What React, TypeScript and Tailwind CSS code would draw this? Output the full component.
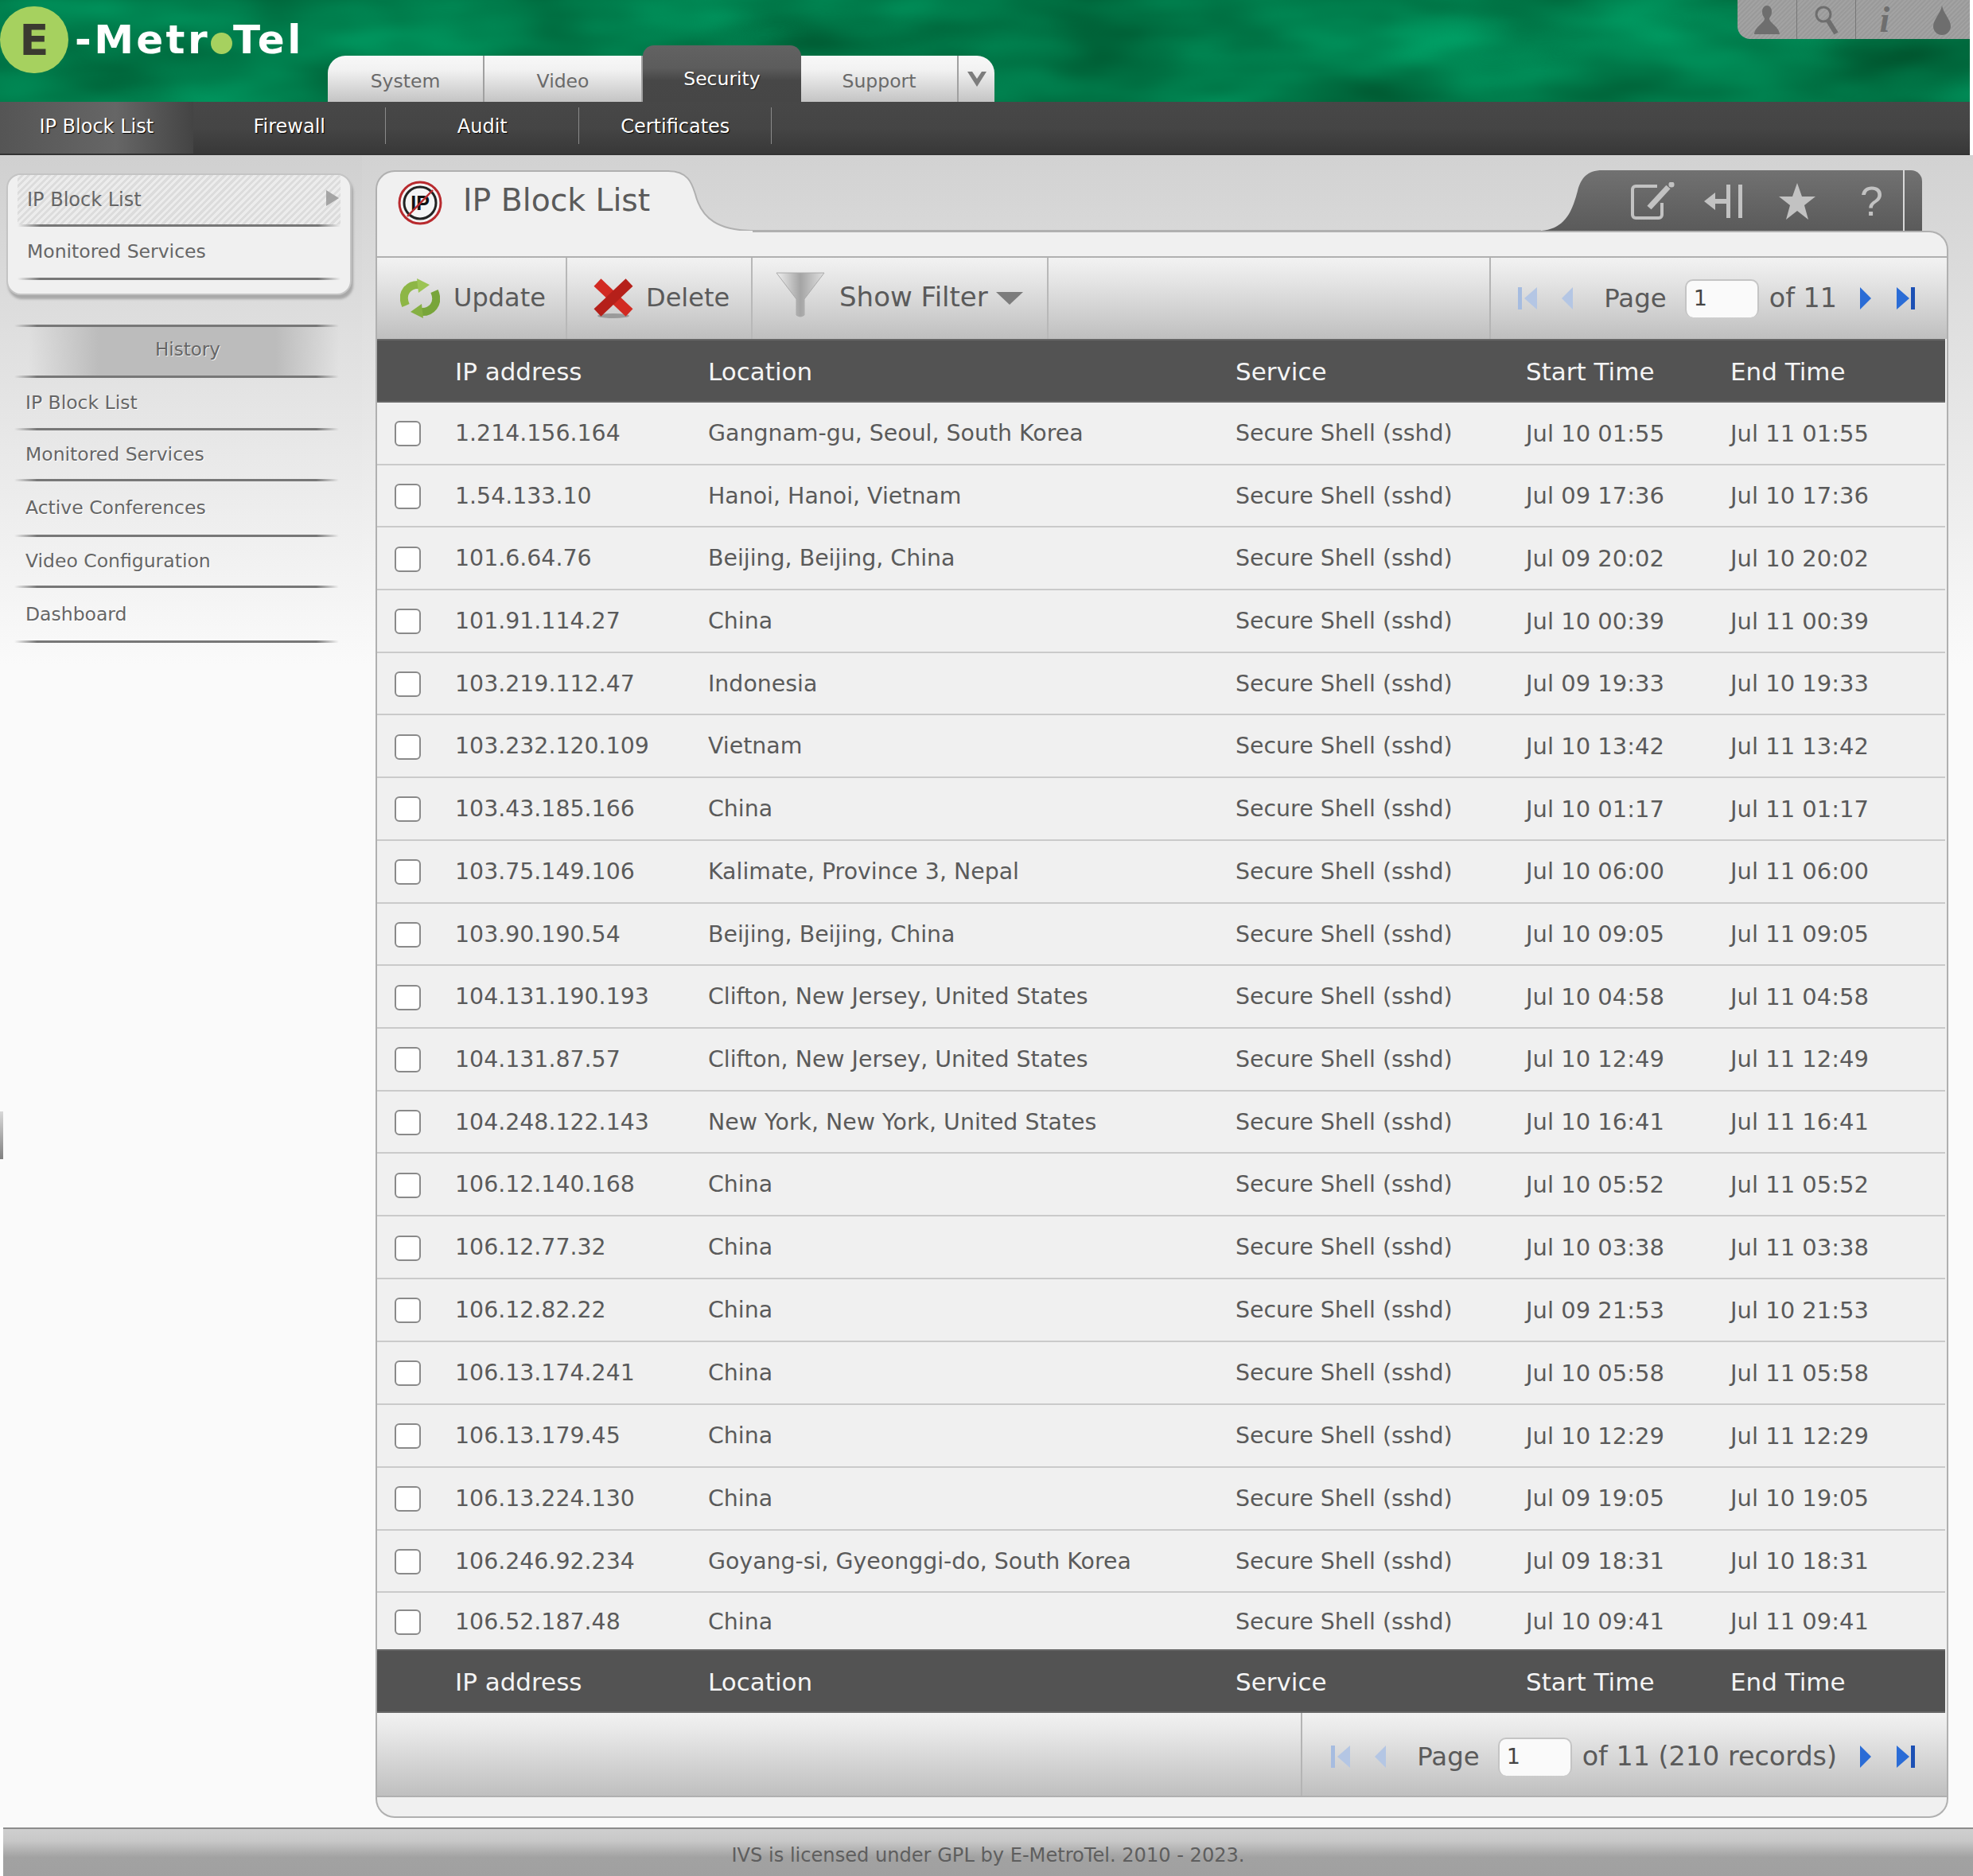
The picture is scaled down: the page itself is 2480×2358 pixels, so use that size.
import React from "react";

const rows: [string, string, string, string][] = [
  ["1.214.156.164", "Gangnam-gu, Seoul, South Korea", "Jul 10 01:55", "Jul 11 01:55"],
  ["1.54.133.10", "Hanoi, Hanoi, Vietnam", "Jul 09 17:36", "Jul 10 17:36"],
  ["101.6.64.76", "Beijing, Beijing, China", "Jul 09 20:02", "Jul 10 20:02"],
  ["101.91.114.27", "China", "Jul 10 00:39", "Jul 11 00:39"],
  ["103.219.112.47", "Indonesia", "Jul 09 19:33", "Jul 10 19:33"],
  ["103.232.120.109", "Vietnam", "Jul 10 13:42", "Jul 11 13:42"],
  ["103.43.185.166", "China", "Jul 10 01:17", "Jul 11 01:17"],
  ["103.75.149.106", "Kalimate, Province 3, Nepal", "Jul 10 06:00", "Jul 11 06:00"],
  ["103.90.190.54", "Beijing, Beijing, China", "Jul 10 09:05", "Jul 11 09:05"],
  ["104.131.190.193", "Clifton, New Jersey, United States", "Jul 10 04:58", "Jul 11 04:58"],
  ["104.131.87.57", "Clifton, New Jersey, United States", "Jul 10 12:49", "Jul 11 12:49"],
  ["104.248.122.143", "New York, New York, United States", "Jul 10 16:41", "Jul 11 16:41"],
  ["106.12.140.168", "China", "Jul 10 05:52", "Jul 11 05:52"],
  ["106.12.77.32", "China", "Jul 10 03:38", "Jul 11 03:38"],
  ["106.12.82.22", "China", "Jul 09 21:53", "Jul 10 21:53"],
  ["106.13.174.241", "China", "Jul 10 05:58", "Jul 11 05:58"],
  ["106.13.179.45", "China", "Jul 10 12:29", "Jul 11 12:29"],
  ["106.13.224.130", "China", "Jul 09 19:05", "Jul 10 19:05"],
  ["106.246.92.234", "Goyang-si, Gyeonggi-do, South Korea", "Jul 09 18:31", "Jul 10 18:31"],
  ["106.52.187.48", "China", "Jul 10 09:41", "Jul 11 09:41"],
];

const COLS = "grid grid-cols-[98px_318px_663px_365px_257px_1fr] items-center";
const LINE_BOX =
  "h-[3px] mx-[12px] bg-[linear-gradient(90deg,transparent,#777_7%,#777_93%,transparent)]";
const LINE =
  "h-[3px] mx-[18px] bg-[linear-gradient(90deg,transparent,#777_7%,#777_93%,transparent)]";

function HeaderRow() {
  return (
    <div className={`${COLS} h-[80px] pt-[2px] bg-[#535353] border-y-2 border-[#666] text-[31px] text-[#f4f4f4]`}>
      <span />
      <span>IP address</span>
      <span>Location</span>
      <span>Service</span>
      <span>Start Time</span>
      <span>End Time</span>
    </div>
  );
}

function Tri({ dir, on }: { dir: "l" | "r"; on: boolean }) {
  const c = on ? "#2a6cd6" : "#b4c6e4";
  return (
    <svg width="18" height="30" viewBox="0 0 18 30" className="block">
      <polygon points={dir === "l" ? "16,1 16,29 2,15" : "2,1 2,29 16,15"} fill={c} />
    </svg>
  );
}

function BarTri({ dir, on }: { dir: "l" | "r"; on: boolean }) {
  const c = on ? "#2a6cd6" : "#b4c6e4";
  const d = on ? "#1c50b4" : "#a6bce0";
  return (
    <svg width="27" height="30" viewBox="0 0 27 30" className="block">
      {dir === "l" ? (
        <>
          <rect x="1" y="1" width="5" height="28" fill={d} />
          <polygon points="25,1 25,29 9,15" fill={c} />
        </>
      ) : (
        <>
          <polygon points="2,1 2,29 18,15" fill={c} />
          <rect x="20" y="1" width="5" height="28" fill={d} />
        </>
      )}
    </svg>
  );
}

function Pager({ label, start }: { label: string; start: string }) {
  return (
    <div className={`flex items-center h-full border-l-2 border-[#b4b4b4] pr-[38px] text-[#5a5a5a] ${start}`}>
      <BarTri dir="l" on={false} />
      <span className="ml-[27px]">
        <Tri dir="l" on={false} />
      </span>
      <span className="ml-[37px] text-[32.4px]">Page</span>
      <div className="ml-[23px] w-[93px] h-[48px] rounded-[10px] bg-[#fafafa] border-2 border-b-0 border-[#c4c4c4] pl-[9px] text-[27px] leading-[44px] text-[#444]">
        1
      </div>
      <span className="ml-[13px] text-[33.4px]">{label}</span>
      <span className="ml-[27px]">
        <Tri dir="r" on />
      </span>
      <span className="ml-[28px]">
        <BarTri dir="r" on />
      </span>
    </div>
  );
}

function SideRow({ label, h }: { label: string; h: string }) {
  return (
    <div className={h + " flex flex-col"}>
      <div className="flex-1 flex items-center pl-[32px] pt-[1px] text-[23.5px] text-[#666] [text-shadow:1px_1px_0_#fff]">
        {label}
      </div>
      <div className={LINE} />
    </div>
  );
}

function TopTab({ label, w }: { label: string; w: string }) {
  return (
    <div
      className={`${w} h-[58px] flex items-center justify-center pt-[7px] text-[23.5px] text-[#6a6a6a] border-r-2 border-[#a0a0a0] bg-[linear-gradient(180deg,#f8f8f8_0%,#f2f2f2_30%,#c4c4c4_100%)]`}
    >
      {label}
    </div>
  );
}

function SubItem({ label, on }: { label: string; on?: boolean }) {
  return (
    <div
      className={`w-[242.5px] h-full flex items-center justify-center text-[24px] text-white [text-shadow:1px_1px_1px_#000] relative ${
        on ? "bg-[linear-gradient(90deg,#555,#666_60%,#444_100%)]" : ""
      }`}
    >
      <span className="pb-[4px]">{label}</span>
    </div>
  );
}

function SubDivider() {
  return <div className="w-[1px] h-[46px] -ml-[1px] mb-[6px] bg-[#8a8a8a]" />;
}

export default function App() {
  return (
    <div className="w-[2480px] h-[2358px] flex flex-col bg-white overflow-hidden font-['DejaVu_Sans',sans-serif]">
      {/* green header */}
      <header className="relative w-[2476px] h-[128px] shrink-0 flex items-end bg-[#007a48] overflow-hidden">
        <svg className="absolute inset-0 w-full h-full" aria-hidden="true">
          <filter id="cloud" x="0" y="0" width="100%" height="100%" colorInterpolationFilters="sRGB">
            <feTurbulence type="fractalNoise" baseFrequency="0.004 0.011" numOctaves="3" seed="7" />
            <feColorMatrix values="0 0 0 0 0  0.38 0 0 0 0.29  0.28 0 0 0 0.15  0 0 0 0 1" />
          </filter>
          <rect width="100%" height="100%" filter="url(#cloud)" />
        </svg>

        {/* logo */}
        <div className="relative self-start mt-[8px] w-[412px] flex items-center h-[84px]">
          <div className="w-[86px] h-[84px] rounded-full bg-[#a6d15f] flex items-center justify-center text-[54px] font-bold text-[#3a3a30]">
            E
          </div>
          <div className="ml-[8px] flex items-center text-[50px] leading-none font-bold text-white tracking-[3.4px]">
            <span>-Metr</span>
            <span className="w-[27px] h-[27px] mx-[1px] mt-[9px] rounded-full bg-[#a6d15f]" />
            <span>Tel</span>
          </div>
        </div>

        {/* tabs */}
        <div className="relative flex items-end">
          <div className="rounded-tl-[22px] overflow-hidden">
            <TopTab label="System" w="w-[197px]" />
          </div>
          <TopTab label="Video" w="w-[199px]" />
          <div className="w-[199px] h-[71px] rounded-t-[14px] flex items-center justify-center pt-[14px] text-[23.5px] text-white [text-shadow:1px_1px_1px_#222] bg-[linear-gradient(180deg,#626262_0%,#5c5c5c_40%,#474747_62%,#464646_100%)]">
            Security
          </div>
          <TopTab label="Support" w="w-[198px]" />
          <div className="w-[45px] h-[58px] rounded-tr-[22px] flex items-center justify-center bg-[linear-gradient(180deg,#f8f8f8_0%,#f2f2f2_30%,#c4c4c4_100%)]">
            <svg width="28" height="24" viewBox="0 0 28 24">
              <path d="M2 3 L14 22 L26 3 L20 3 L14 12 L8 3 Z" fill="#7d7d7d" />
            </svg>
          </div>
        </div>

        {/* top-right tool strip */}
        <div className="absolute top-0 right-0 w-[292px] h-[49px] rounded-bl-[16px] flex bg-[repeating-linear-gradient(135deg,#a2a2a2_0,#a2a2a2_2px,#9a9a9a_2px,#9a9a9a_4px)]">
          <div className="w-[75px] h-full flex items-center justify-center border-r border-[#777]">
            <svg width="40" height="40" viewBox="0 0 40 40">
              <path d="M20 2 a6 7 0 0 1 6 8 c0 4 -2 6 -3 8 c0 6 12 10 13 20 H4 c1 -10 13 -14 13 -20 c-1 -2 -3 -4 -3 -8 a6 7 0 0 1 6 -8 Z" fill="#6e6e6e" />
            </svg>
          </div>
          <div className="w-[74px] h-full flex items-center justify-center border-r border-[#777]">
            <svg width="38" height="40" viewBox="0 0 38 40" fill="none" stroke="#6e6e6e">
              <circle cx="15" cy="13" r="9" strokeWidth="3" />
              <path d="M21 21 L31 37" strokeWidth="6" />
            </svg>
          </div>
          <div className="w-[72px] h-full flex items-center justify-center">
            <span className="font-['Liberation_Serif',serif] italic font-bold text-[46px] leading-none text-[#6e6e6e]">i</span>
          </div>
          <div className="flex-1 h-full flex items-center justify-center">
            <svg width="26" height="40" viewBox="0 0 26 40">
              <path d="M13 2 C15 12 24 20 24 28 a11 11 0 0 1 -22 0 C2 20 11 12 13 2 Z" fill="#6e6e6e" />
            </svg>
          </div>
        </div>
      </header>

      {/* sub nav */}
      <nav className="w-[2476px] h-[67px] shrink-0 flex items-center bg-[linear-gradient(180deg,#474747_0%,#454545_50%,#383838_100%)] border-b-2 border-[#333]">
        <SubItem label="IP Block List" on />
        <SubDivider />
        <SubItem label="Firewall" />
        <SubDivider />
        <SubItem label="Audit" />
        <SubDivider />
        <SubItem label="Certificates" />
        <SubDivider />
      </nav>

      {/* body */}
      <div className="flex-1 flex min-h-0 bg-[linear-gradient(180deg,#d2d2d2_0px,#fafafa_640px)]">
        {/* sidebar */}
        <aside className="relative w-[455px] shrink-0 bg-[linear-gradient(180deg,#d0d0d0_0px,#fafafa_640px)]">
          <div className="absolute left-0 top-[1202px] w-[4px] h-[60px] bg-[linear-gradient(180deg,#d8d8d8,#808080)]" />
          <div className="mt-[23px] ml-[8px] w-[434px] h-[153px] rounded-[18px] bg-[#f0f0f0] border-2 border-[#c4c4c4] shadow-[2px_5px_3px_#a8a8a8] overflow-hidden">
            <div className="relative h-[62px] mx-[12px] flex items-center pl-[12px] text-[24px] text-[#666] bg-[repeating-linear-gradient(135deg,#ececec_0,#ececec_3px,#dcdcdc_3px,#dcdcdc_6px)]">
              IP Block List
              <svg width="16" height="20" viewBox="0 0 16 20" className="absolute right-[2px] top-[19px]">
                <polygon points="0,0 16,10 0,20" fill="#a4a4a4" />
              </svg>
            </div>
            <div className={LINE_BOX} />
            <div className="h-[64px] flex items-center pl-[24px] text-[23.5px] text-[#666]">Monitored Services</div>
            <div className={LINE_BOX} />
          </div>

          <div className="mt-[37px] w-[444px]">
            <div className={LINE} />
            <div className="h-[61px] flex items-center justify-center pl-[28px] pb-[4px] text-[23px] text-[#666] [text-shadow:1px_1px_0_#eee] bg-[linear-gradient(90deg,transparent_8%,#bcbcbc_28%,#bcbcbc_78%,transparent_96%)]">
              History
            </div>
            <div className={LINE} />
            <SideRow label="IP Block List" h="h-[66px]" />
            <SideRow label="Monitored Services" h="h-[64px]" />
            <SideRow label="Active Conferences" h="h-[70px]" />
            <SideRow label="Video Configuration" h="h-[64px]" />
            <SideRow label="Dashboard" h="h-[69px]" />
          </div>
        </aside>

        {/* main */}
        <main className="ml-[17px] mt-[19px] w-[1977px]">
          {/* panel tabs */}
          <div className="flex h-[77px] items-stretch">
            <div className="w-[368px] flex items-start pl-[25px] pt-[10px] rounded-tl-[24px] border-l-2 border-t-2 border-[#b0b0b0] bg-[#f0f0f0]">
              <svg width="58" height="58" viewBox="0 0 58 58" className="shrink-0">
                <circle cx="29" cy="29" r="26" fill="#f4f4f4" stroke="#b82a2e" strokeWidth="3" />
                <circle cx="29" cy="29" r="20" fill="none" stroke="#222" strokeWidth="3" />
                <text x="29" y="38" textAnchor="middle" fontSize="25" fontWeight="700" fontFamily="Liberation Sans, sans-serif" fill="#111">IP</text>
                <path d="M13 46 L45 13" stroke="#b82a2e" strokeWidth="2.5" />
              </svg>
              <span className="ml-[25px] -mt-[3px] text-[39.3px] leading-[58px] text-[#5a5a5a]">IP Block List</span>
            </div>
            <svg width="104" height="77" viewBox="0 0 104 77" className="shrink-0 block">
              <path d="M0 0 C26 0 30 18 34 30 C42 62 64 75 104 75 L104 77 L0 77 Z" fill="#f0f0f0" />
              <path d="M0 1 C26 1 30 18 34 30 C42 62 64 75 104 76" fill="none" stroke="#b0b0b0" strokeWidth="2" />
            </svg>
            <div className="flex-1 border-b-2 border-[#b0b0b0]" />
            <svg width="77" height="77" viewBox="0 0 77 77" className="shrink-0 block">
              <defs>
                <linearGradient id="tabg" x1="0" x2="0" y1="0" y2="1">
                  <stop offset="0" stopColor="#717171" />
                  <stop offset="1" stopColor="#5a5a5a" />
                </linearGradient>
              </defs>
              <path d="M0 76 C32 74 40 48 46 26 C50 10 58 0 77 0 L77 77 L0 77 Z" fill="url(#tabg)" />
            </svg>
            <div className="w-[402px] h-[77px] flex items-center rounded-tr-[14px] bg-[linear-gradient(180deg,#717171,#5a5a5a)] mr-[33px]">
              <svg width="58" height="48" viewBox="0 0 58 48" fill="none" className="ml-[35px]" stroke="#c2c2c2" strokeWidth="4">
                <path d="M34 5 H7 a4 4 0 0 0 -4 4 V41 a4 4 0 0 0 4 4 H36 a4 4 0 0 0 4 -4 V26" />
                <path d="M24 32 L48 6" strokeWidth="7" />
                <circle cx="52" cy="3" r="1.6" fill="#c2c2c2" />
              </svg>
              <svg width="50" height="46" viewBox="0 0 50 46" className="ml-[35px]" fill="#c2c2c2">
                <polygon points="0,23 14,12 14,20 30,20 30,26 14,26 14,34" />
                <rect x="28" y="2" width="5" height="42" />
                <rect x="43" y="2" width="5" height="42" />
              </svg>
              <svg width="48" height="48" viewBox="0 0 48 48" className="ml-[43px]">
                <polygon points="24,1 30,18 47,18 33,29 38,47 24,36 10,47 15,29 1,18 18,18" fill="#c2c2c2" />
              </svg>
              <span className="ml-[55px] w-[36px] text-[52px] leading-none text-[#c2c2c2] font-['Liberation_Sans',sans-serif]">?</span>
              <div className="ml-[18px] h-full w-[2px] bg-[#d8d8d8]" />
            </div>
          </div>

          {/* band under tabs */}
          <div className="flex h-[32px] -mt-[1px]">
            <div className="w-[474px] border-l-2 border-[#b0b0b0] bg-[#f0f0f0]" />
            <div className="flex-1 border-r-2 border-t-2 border-[#b0b0b0] rounded-tr-[24px] bg-[#f0f0f0]" />
          </div>

          {/* toolbar */}
          <div className="flex items-center h-[104px] border-2 border-b-0 border-[#b0b0b0] text-[32px] text-[#5a5a5a] bg-[linear-gradient(180deg,#f2f2f2_0%,#e4e4e4_30%,#bfbfbf_100%)]">
            <div className="w-[239px] h-full flex items-center border-r-2 border-[#b8b8b8] pl-[29px]">
              <svg width="50" height="50" viewBox="0 0 50 50" className="shrink-0" fill="none">
                <path d="M7 34 C0 18 11 7 24 8" stroke="#8db646" strokeWidth="10" />
                <polygon points="21,0 37,8 23,18" fill="#9cc455" />
                <path d="M43 16 C50 32 39 43 26 42" stroke="#78a53a" strokeWidth="10" />
                <polygon points="29,50 13,42 27,32" fill="#86b043" />
              </svg>
              <span className="ml-[17px] -mt-[2px]">Update</span>
            </div>
            <div className="w-[233px] h-full flex items-center border-r-2 border-[#b8b8b8] pl-[33px]">
              <svg width="50" height="52" viewBox="0 0 50 52" className="shrink-0">
                <ellipse cx="25" cy="48" rx="20" ry="3" fill="#9a9a9a" />
                <path d="M5 6 L45 44" stroke="#d22a22" strokeWidth="13" />
                <path d="M45 6 L5 44" stroke="#b5201a" strokeWidth="13" />
              </svg>
              <span className="ml-[16px] -mt-[2px]">Delete</span>
            </div>
            <div className="w-[372px] h-full flex items-center border-r-2 border-[#b8b8b8] pl-[29px]">
              <svg width="62" height="58" viewBox="0 0 62 58" className="shrink-0 -mt-[8px]">
                <defs>
                  <linearGradient id="fun" x1="0" x2="1" y1="0" y2="0">
                    <stop offset="0" stopColor="#f0f0f0" />
                    <stop offset="0.5" stopColor="#a4a4a4" />
                    <stop offset="1" stopColor="#e0e0e0" />
                  </linearGradient>
                </defs>
                <path d="M1 1 H61 L36 34 V54 Q31 58 26 54 V34 Z" fill="url(#fun)" stroke="#aaa" strokeWidth="1" />
              </svg>
              <span className="ml-[18px] -mt-[4px] text-[34px]">Show Filter</span>
              <svg width="34" height="18" viewBox="0 0 34 18" className="ml-[10px]">
                <polygon points="0,1 34,1 17,17" fill="#7c7c7c" />
              </svg>
            </div>
            <div className="flex-1" />
            <Pager label="of 11" start="pl-[33px]" />
          </div>

          {/* table */}
          <div className="border-x-2 border-[#b0b0b0] pr-[2px] bg-[#f0f0f0]">
            <HeaderRow />
            {rows.map((r, i) => (
              <div
                key={r[0]}
                className={`${COLS} ${i === 19 ? "h-[71px]" : i < 12 ? "h-[78.7px] border-b-2" : "h-[78.9px] border-b-2"} pt-[2px] border-[#cacaca] text-[28.4px] text-[#5a5a5a]`}
              >
                <span className="pl-[22px] flex items-center">
                  <input
                    type="checkbox"
                    readOnly
                    className="appearance-none w-[33px] h-[32px] rounded-[6px] border-2 border-[#8a8a8a] bg-white block"
                  />
                </span>
                <span>{r[0]}</span>
                <span>{r[1]}</span>
                <span>Secure Shell (sshd)</span>
                <span className="text-[29px]">{r[2]}</span>
                <span className="text-[29px]">{r[3]}</span>
              </div>
            ))}
            <HeaderRow />
          </div>

          {/* bottom toolbar */}
          <div className="h-[106px] flex items-center border-x-2 border-b-2 border-[#b0b0b0] bg-[linear-gradient(180deg,#f2f2f2_0%,#e4e4e4_30%,#bfbfbf_100%)]">
            <div className="flex-1" />
            <Pager label="of 11 (210 records)" start="pl-[35px] pt-[6px]" />
          </div>
          <div className="h-[26px] bg-[#f0f0f0] border-x-2 border-b-2 border-[#b0b0b0] rounded-b-[24px]" />
        </main>
      </div>

      {/* footer */}
      <footer className="ml-[4px] h-[61px] shrink-0 flex items-center justify-center pt-[7px] text-[24.1px] text-[#5e5e5e] border-t-2 border-[#8c8c8c] bg-[linear-gradient(180deg,#cfcfcf_0%,#c8c8c8_25%,#a2a2a2_60%,#a0a0a0_100%)]">
        IVS is licensed under GPL by E-MetroTel. 2010 - 2023.
      </footer>
    </div>
  );
}
